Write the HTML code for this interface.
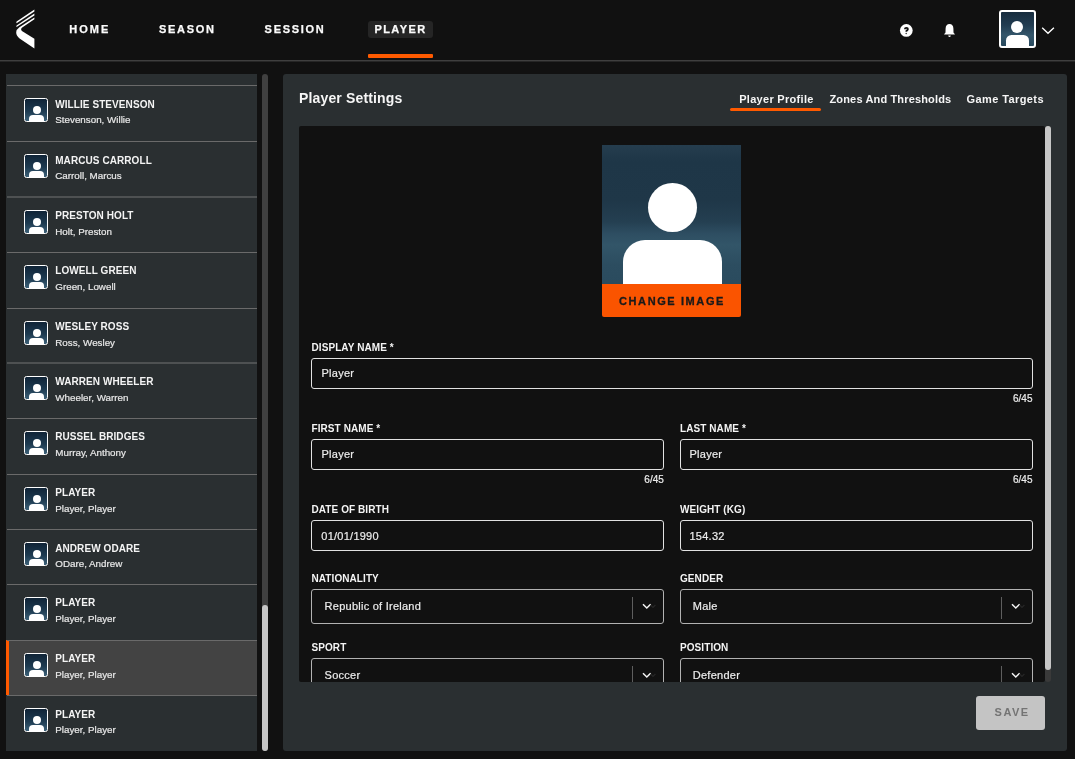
<!DOCTYPE html>
<html><head><meta charset="utf-8"><title>Player Settings</title>
<style>
html,body{margin:0;padding:0;}
body{width:1075px;height:759px;overflow:hidden;background:#111111;position:relative;font-family:"Liberation Sans", sans-serif;}
.b{position:absolute;}
.t{position:absolute;white-space:nowrap;}
.r{-webkit-text-stroke:0.2px currentColor;}
.av{box-sizing:content-box;background:linear-gradient(180deg,#102437 0%,#1d3a50 55%,#3d6178 100%);overflow:hidden;}
</style></head><body>
<div id="root" style="position:absolute;left:0;top:0;width:1075px;height:759px;overflow:hidden;will-change:transform;">
<svg class="b" style="left:0;top:0" width="60" height="60" viewBox="0 0 60 60">
<path fill="#fff" d="M34.4 9.6 L34.4 11.5 L16.6 23.2 L16.3 22.6 L16.6 21.5 Z"/>
<path fill="#fff" d="M34.4 13.5 L34.4 15.4 L16.6 27.1 L16.3 26.5 L16.6 25.4 Z"/>
<path fill="#fff" d="M34.4 17.5 L34.4 19.3 L22.2 27.6 Q20.2 29.2 21.9 31.1 L34.4 38.8 L34.4 48.4 L19.6 38.4 Q16.1 35.9 16.2 32.3 Q16.4 29.4 19.4 27.3 Z"/>
</svg>
<div class="b" style="left:368px;top:20.6px;width:65px;height:17px;background:#252525;border-radius:3px;"></div>
<div class="t" style="left:69.30px;top:24.00px;font-size:11px;line-height:11px;font-weight:bold;color:#fbfbfb;-webkit-text-stroke:0.25px #fbfbfb;letter-spacing:2.0px;">HOME</div>
<div class="t" style="left:159.00px;top:24.00px;font-size:11px;line-height:11px;font-weight:bold;color:#fbfbfb;-webkit-text-stroke:0.25px #fbfbfb;letter-spacing:1.7px;">SEASON</div>
<div class="t" style="left:264.60px;top:24.00px;font-size:11px;line-height:11px;font-weight:bold;color:#fbfbfb;-webkit-text-stroke:0.25px #fbfbfb;letter-spacing:1.7px;">SESSION</div>
<div class="t" style="left:374.40px;top:24.00px;font-size:11px;line-height:11px;font-weight:bold;color:#fbfbfb;-webkit-text-stroke:0.25px #fbfbfb;letter-spacing:1.45px;">PLAYER</div>
<div class="b" style="left:368px;top:54px;width:65px;height:4px;background:#ff5a00;border-radius:1px;"></div>
<div class="b" style="left:0px;top:60px;width:1075px;height:1px;background:#3f3f3f;"></div>
<div class="b" style="left:0px;top:61px;width:1075px;height:1px;background:#262626;"></div>
<svg class="b" style="left:898px;top:22px" width="18" height="18" viewBox="0 0 18 18">
<circle cx="8.3" cy="8.45" r="6.35" fill="#fff"/>
<path d="M7.0 7.3 Q6.9 5.9 8.4 5.9 Q9.9 5.9 9.9 7.1 Q9.9 7.9 9.0 8.4 Q8.3 8.8 8.3 9.7" stroke="#111" stroke-width="1.8" fill="none"/>
<circle cx="8.2" cy="11.6" r="0.75" fill="#333"/>
</svg>
<svg class="b" style="left:940px;top:20px" width="20" height="20" viewBox="0 0 20 20">
<path fill="#fff" d="M9.5 4 Q13.2 4 13.4 8.5 L13.5 12.6 Q13.8 13.4 14.8 13.9 L14.8 14.6 L4.2 14.6 L4.2 13.9 Q5.2 13.4 5.5 12.6 L5.6 8.5 Q5.8 4 9.5 4 Z"/>
<path fill="#fff" d="M8.2 15.4 L10.8 15.4 Q10.6 16.9 9.5 16.9 Q8.4 16.9 8.2 15.4 Z"/>
</svg>
<div class="b av" style="background:linear-gradient(180deg,#172c3e 0%,#223d52 40%,#34566b 68%,#284a5e 100%);left:999px;top:10px;width:33px;height:34px;border:2px solid #fff;border-radius:3px;"><div class="b" style="left:10.4px;top:9.4px;width:11.8px;height:11.8px;border-radius:50%;background:#fff"></div><div class="b" style="left:4.8px;top:22.8px;width:23.2px;height:12px;border-radius:5.5px 5.5px 0 0;background:#fff"></div></div>
<svg class="b" style="left:1038px;top:22px" width="20" height="16" viewBox="0 0 20 16">
<path d="M4.2 5.8 L10 11.3 L15.9 5.8" stroke="#fff" stroke-width="1.35" fill="none"/>
</svg>
<div class="b" style="left:6px;top:74px;width:251px;height:677px;background:#2a2f31;"></div>
<div class="b" style="left:7px;top:85px;width:250px;height:1px;background:#6a6a6a;"></div>
<div class="b av" style="left:24px;top:98px;width:22.3px;height:22.3px;border:1.5px solid #fff;border-radius:2.5px;"><div class="b" style="left:7.6px;top:6.6px;width:8.0px;height:8.0px;border-radius:50%;background:#fff"></div><div class="b" style="left:3.8px;top:15.6px;width:15.5px;height:8px;border-radius:4px 4px 0 0;background:#fff"></div></div>
<div class="t" style="left:55.20px;top:100.00px;font-size:10px;line-height:10px;font-weight:bold;color:#f4f4f4;letter-spacing:0.08px;">WILLIE STEVENSON</div>
<div class="t r" style="left:55.30px;top:115.00px;font-size:9.8px;line-height:9.8px;font-weight:normal;color:#e8e8e8;letter-spacing:0px;">Stevenson, Willie</div>
<div class="b" style="left:7px;top:141px;width:250px;height:1px;background:#6a6a6a;"></div>
<div class="b av" style="left:24px;top:154px;width:22.3px;height:22.3px;border:1.5px solid #fff;border-radius:2.5px;"><div class="b" style="left:7.6px;top:6.6px;width:8.0px;height:8.0px;border-radius:50%;background:#fff"></div><div class="b" style="left:3.8px;top:15.6px;width:15.5px;height:8px;border-radius:4px 4px 0 0;background:#fff"></div></div>
<div class="t" style="left:55.20px;top:156.00px;font-size:10px;line-height:10px;font-weight:bold;color:#f4f4f4;letter-spacing:0.08px;">MARCUS CARROLL</div>
<div class="t r" style="left:55.30px;top:171.00px;font-size:9.8px;line-height:9.8px;font-weight:normal;color:#e8e8e8;letter-spacing:0px;">Carroll, Marcus</div>
<div class="b" style="left:7px;top:196px;width:250px;height:2px;background:#4e5152;"></div>
<div class="b av" style="left:24px;top:210px;width:22.3px;height:22.3px;border:1.5px solid #fff;border-radius:2.5px;"><div class="b" style="left:7.6px;top:6.6px;width:8.0px;height:8.0px;border-radius:50%;background:#fff"></div><div class="b" style="left:3.8px;top:15.6px;width:15.5px;height:8px;border-radius:4px 4px 0 0;background:#fff"></div></div>
<div class="t" style="left:55.20px;top:211.00px;font-size:10px;line-height:10px;font-weight:bold;color:#f4f4f4;letter-spacing:0.08px;">PRESTON HOLT</div>
<div class="t r" style="left:55.30px;top:227.00px;font-size:9.8px;line-height:9.8px;font-weight:normal;color:#e8e8e8;letter-spacing:0px;">Holt, Preston</div>
<div class="b" style="left:7px;top:252px;width:250px;height:1px;background:#6a6a6a;"></div>
<div class="b av" style="left:24px;top:265px;width:22.3px;height:22.3px;border:1.5px solid #fff;border-radius:2.5px;"><div class="b" style="left:7.6px;top:6.6px;width:8.0px;height:8.0px;border-radius:50%;background:#fff"></div><div class="b" style="left:3.8px;top:15.6px;width:15.5px;height:8px;border-radius:4px 4px 0 0;background:#fff"></div></div>
<div class="t" style="left:55.20px;top:266.00px;font-size:10px;line-height:10px;font-weight:bold;color:#f4f4f4;letter-spacing:0.08px;">LOWELL GREEN</div>
<div class="t r" style="left:55.30px;top:282.00px;font-size:9.8px;line-height:9.8px;font-weight:normal;color:#e8e8e8;letter-spacing:0px;">Green, Lowell</div>
<div class="b" style="left:7px;top:308px;width:250px;height:1px;background:#6a6a6a;"></div>
<div class="b av" style="left:24px;top:321px;width:22.3px;height:22.3px;border:1.5px solid #fff;border-radius:2.5px;"><div class="b" style="left:7.6px;top:6.6px;width:8.0px;height:8.0px;border-radius:50%;background:#fff"></div><div class="b" style="left:3.8px;top:15.6px;width:15.5px;height:8px;border-radius:4px 4px 0 0;background:#fff"></div></div>
<div class="t" style="left:55.20px;top:322.00px;font-size:10px;line-height:10px;font-weight:bold;color:#f4f4f4;letter-spacing:0.08px;">WESLEY ROSS</div>
<div class="t r" style="left:55.30px;top:338.00px;font-size:9.8px;line-height:9.8px;font-weight:normal;color:#e8e8e8;letter-spacing:0px;">Ross, Wesley</div>
<div class="b" style="left:7px;top:362px;width:250px;height:2px;background:#4e5152;"></div>
<div class="b av" style="left:24px;top:376px;width:22.3px;height:22.3px;border:1.5px solid #fff;border-radius:2.5px;"><div class="b" style="left:7.6px;top:6.6px;width:8.0px;height:8.0px;border-radius:50%;background:#fff"></div><div class="b" style="left:3.8px;top:15.6px;width:15.5px;height:8px;border-radius:4px 4px 0 0;background:#fff"></div></div>
<div class="t" style="left:55.20px;top:377.00px;font-size:10px;line-height:10px;font-weight:bold;color:#f4f4f4;letter-spacing:0.08px;">WARREN WHEELER</div>
<div class="t r" style="left:55.30px;top:393.00px;font-size:9.8px;line-height:9.8px;font-weight:normal;color:#e8e8e8;letter-spacing:0px;">Wheeler, Warren</div>
<div class="b" style="left:7px;top:418px;width:250px;height:1px;background:#6a6a6a;"></div>
<div class="b av" style="left:24px;top:431px;width:22.3px;height:22.3px;border:1.5px solid #fff;border-radius:2.5px;"><div class="b" style="left:7.6px;top:6.6px;width:8.0px;height:8.0px;border-radius:50%;background:#fff"></div><div class="b" style="left:3.8px;top:15.6px;width:15.5px;height:8px;border-radius:4px 4px 0 0;background:#fff"></div></div>
<div class="t" style="left:55.20px;top:432.00px;font-size:10px;line-height:10px;font-weight:bold;color:#f4f4f4;letter-spacing:0.08px;">RUSSEL BRIDGES</div>
<div class="t r" style="left:55.30px;top:448.00px;font-size:9.8px;line-height:9.8px;font-weight:normal;color:#e8e8e8;letter-spacing:0px;">Murray, Anthony</div>
<div class="b" style="left:7px;top:474px;width:250px;height:1px;background:#6a6a6a;"></div>
<div class="b av" style="left:24px;top:487px;width:22.3px;height:22.3px;border:1.5px solid #fff;border-radius:2.5px;"><div class="b" style="left:7.6px;top:6.6px;width:8.0px;height:8.0px;border-radius:50%;background:#fff"></div><div class="b" style="left:3.8px;top:15.6px;width:15.5px;height:8px;border-radius:4px 4px 0 0;background:#fff"></div></div>
<div class="t" style="left:55.20px;top:488.00px;font-size:10px;line-height:10px;font-weight:bold;color:#f4f4f4;letter-spacing:0.08px;">PLAYER</div>
<div class="t r" style="left:55.30px;top:504.00px;font-size:9.8px;line-height:9.8px;font-weight:normal;color:#e8e8e8;letter-spacing:0px;">Player, Player</div>
<div class="b" style="left:7px;top:529px;width:250px;height:1px;background:#6a6a6a;"></div>
<div class="b av" style="left:24px;top:542px;width:22.3px;height:22.3px;border:1.5px solid #fff;border-radius:2.5px;"><div class="b" style="left:7.6px;top:6.6px;width:8.0px;height:8.0px;border-radius:50%;background:#fff"></div><div class="b" style="left:3.8px;top:15.6px;width:15.5px;height:8px;border-radius:4px 4px 0 0;background:#fff"></div></div>
<div class="t" style="left:55.20px;top:544.00px;font-size:10px;line-height:10px;font-weight:bold;color:#f4f4f4;letter-spacing:0.08px;">ANDREW ODARE</div>
<div class="t r" style="left:55.30px;top:559.00px;font-size:9.8px;line-height:9.8px;font-weight:normal;color:#e8e8e8;letter-spacing:0px;">ODare, Andrew</div>
<div class="b" style="left:7px;top:584px;width:250px;height:1px;background:#6a6a6a;"></div>
<div class="b av" style="left:24px;top:597px;width:22.3px;height:22.3px;border:1.5px solid #fff;border-radius:2.5px;"><div class="b" style="left:7.6px;top:6.6px;width:8.0px;height:8.0px;border-radius:50%;background:#fff"></div><div class="b" style="left:3.8px;top:15.6px;width:15.5px;height:8px;border-radius:4px 4px 0 0;background:#fff"></div></div>
<div class="t" style="left:55.20px;top:598.00px;font-size:10px;line-height:10px;font-weight:bold;color:#f4f4f4;letter-spacing:0.08px;">PLAYER</div>
<div class="t r" style="left:55.30px;top:614.00px;font-size:9.8px;line-height:9.8px;font-weight:normal;color:#e8e8e8;letter-spacing:0px;">Player, Player</div>
<div class="b" style="left:6px;top:640px;width:251px;height:55px;background:#434343;"></div>
<div class="b" style="left:6px;top:640px;width:3px;height:55px;background:#ff5a00;"></div>
<div class="b" style="left:7px;top:640px;width:250px;height:1px;background:#6a6a6a;"></div>
<div class="b av" style="left:24px;top:653px;width:22.3px;height:22.3px;border:1.5px solid #fff;border-radius:2.5px;"><div class="b" style="left:7.6px;top:6.6px;width:8.0px;height:8.0px;border-radius:50%;background:#fff"></div><div class="b" style="left:3.8px;top:15.6px;width:15.5px;height:8px;border-radius:4px 4px 0 0;background:#fff"></div></div>
<div class="t" style="left:55.20px;top:654.00px;font-size:10px;line-height:10px;font-weight:bold;color:#f4f4f4;letter-spacing:0.08px;">PLAYER</div>
<div class="t r" style="left:55.30px;top:670.00px;font-size:9.8px;line-height:9.8px;font-weight:normal;color:#e8e8e8;letter-spacing:0px;">Player, Player</div>
<div class="b" style="left:7px;top:695px;width:250px;height:1px;background:#6a6a6a;"></div>
<div class="b av" style="left:24px;top:708px;width:22.3px;height:22.3px;border:1.5px solid #fff;border-radius:2.5px;"><div class="b" style="left:7.6px;top:6.6px;width:8.0px;height:8.0px;border-radius:50%;background:#fff"></div><div class="b" style="left:3.8px;top:15.6px;width:15.5px;height:8px;border-radius:4px 4px 0 0;background:#fff"></div></div>
<div class="t" style="left:55.20px;top:710.00px;font-size:10px;line-height:10px;font-weight:bold;color:#f4f4f4;letter-spacing:0.08px;">PLAYER</div>
<div class="t r" style="left:55.30px;top:725.00px;font-size:9.8px;line-height:9.8px;font-weight:normal;color:#e8e8e8;letter-spacing:0px;">Player, Player</div>
<div class="b" style="left:262px;top:74px;width:6px;height:677px;background:#404040;border-radius:3px;"></div>
<div class="b" style="left:262px;top:605px;width:6px;height:146px;background:#c6c6c6;border-radius:3px;"></div>
<div class="b" style="left:283px;top:74px;width:783.5px;height:677px;background:#2a2f31;border-radius:3px;"></div>
<div class="t" style="left:299.00px;top:91.00px;font-size:14px;line-height:14px;font-weight:bold;color:#f6f6f6;letter-spacing:0.15px;">Player Settings</div>
<div class="t" style="left:739.20px;top:94.00px;font-size:11px;line-height:11px;font-weight:bold;color:#f6f6f6;letter-spacing:0.3px;">Player Profile</div>
<div class="t" style="left:829.50px;top:94.00px;font-size:11px;line-height:11px;font-weight:bold;color:#f6f6f6;letter-spacing:0.15px;">Zones And Thresholds</div>
<div class="t" style="left:966.60px;top:94.00px;font-size:11px;line-height:11px;font-weight:bold;color:#f6f6f6;letter-spacing:0.4px;">Game Targets</div>
<div class="b" style="left:730px;top:108px;width:91px;height:3px;background:#ff5a00;border-radius:1.5px;"></div>
<div class="b" style="left:299px;top:126px;width:752px;height:556px;overflow:hidden;"><div class="b" style="left:0;top:0;width:746px;height:556px;background:#111111;border-radius:2px;"></div><div class="b" style="left:303px;top:19px;width:139px;height:139px;background:linear-gradient(180deg,#253d4e 0%,#1e3647 12%,#1f3748 40%,#243f51 55%,#2e4e62 64%,#325568 72%,#2c4d60 86%,#2a4b5e 100%);"></div>
<div class="b" style="left:349px;top:57px;width:49px;height:49px;background:#fff;border-radius:50%;"></div>
<div class="b" style="left:323.5px;top:114px;width:99.5px;height:44px;background:#fff;border-radius:22px 22px 0 0;"></div>
<div class="b" style="left:303px;top:158px;width:139px;height:33px;background:#fa5400;border-radius:0 0 2px 2px;"></div>
<div class="t" style="left:320.00px;top:170.00px;font-size:11px;line-height:11px;font-weight:bold;color:#1a1a1a;-webkit-text-stroke:0.3px #1a1a1a;letter-spacing:1.6px;">CHANGE IMAGE</div>
<div class="t" style="left:12.50px;top:217.00px;font-size:10px;line-height:10px;font-weight:bold;color:#f4f4f4;letter-spacing:0.08px;">DISPLAY NAME *</div>
<div class="b" style="left:12px;top:232px;width:722px;height:31px;box-sizing:border-box;border:1.2px solid #e2e2e2;border-radius:3px;"></div>
<div class="t r" style="left:22.50px;top:242.00px;font-size:11px;line-height:11px;font-weight:normal;color:#ececec;letter-spacing:0.25px;">Player</div>
<div class="t r" style="right:18.50px;top:268.00px;font-size:10px;line-height:10px;font-weight:normal;color:#ececec;letter-spacing:0px;">6/45</div>
<div class="t" style="left:12.50px;top:298.00px;font-size:10px;line-height:10px;font-weight:bold;color:#f4f4f4;letter-spacing:0.08px;">FIRST NAME *</div>
<div class="t" style="left:381.00px;top:298.00px;font-size:10px;line-height:10px;font-weight:bold;color:#f4f4f4;letter-spacing:0.08px;">LAST NAME *</div>
<div class="b" style="left:12px;top:313px;width:353px;height:31px;box-sizing:border-box;border:1.2px solid #e2e2e2;border-radius:3px;"></div>
<div class="t r" style="left:22.50px;top:323.00px;font-size:11px;line-height:11px;font-weight:normal;color:#ececec;letter-spacing:0.25px;">Player</div>
<div class="b" style="left:381px;top:313px;width:353px;height:31px;box-sizing:border-box;border:1.2px solid #e2e2e2;border-radius:3px;"></div>
<div class="t r" style="left:390.50px;top:323.00px;font-size:11px;line-height:11px;font-weight:normal;color:#ececec;letter-spacing:0.25px;">Player</div>
<div class="t r" style="right:387.20px;top:349.00px;font-size:10px;line-height:10px;font-weight:normal;color:#ececec;letter-spacing:0px;">6/45</div>
<div class="t r" style="right:18.50px;top:349.00px;font-size:10px;line-height:10px;font-weight:normal;color:#ececec;letter-spacing:0px;">6/45</div>
<div class="t" style="left:12.50px;top:379.00px;font-size:10px;line-height:10px;font-weight:bold;color:#f4f4f4;letter-spacing:0.08px;">DATE OF BIRTH</div>
<div class="t" style="left:381.00px;top:379.00px;font-size:10px;line-height:10px;font-weight:bold;color:#f4f4f4;letter-spacing:0.08px;">WEIGHT (KG)</div>
<div class="b" style="left:12px;top:394px;width:353px;height:31px;box-sizing:border-box;border:1.2px solid #e2e2e2;border-radius:3px;"></div>
<div class="t r" style="left:22.30px;top:405.00px;font-size:11px;line-height:11px;font-weight:normal;color:#ececec;letter-spacing:0.25px;">01/01/1990</div>
<div class="b" style="left:381px;top:394px;width:353px;height:31px;box-sizing:border-box;border:1.2px solid #e2e2e2;border-radius:3px;"></div>
<div class="t r" style="left:390.50px;top:405.00px;font-size:11px;line-height:11px;font-weight:normal;color:#ececec;letter-spacing:0.25px;">154.32</div>
<div class="t" style="left:12.50px;top:448.00px;font-size:10px;line-height:10px;font-weight:bold;color:#f4f4f4;letter-spacing:0.08px;">NATIONALITY</div>
<div class="t" style="left:381.00px;top:448.00px;font-size:10px;line-height:10px;font-weight:bold;color:#f4f4f4;letter-spacing:0.08px;">GENDER</div>
<div class="b" style="left:12px;top:463px;width:353px;height:34.5px;box-sizing:border-box;border:1.2px solid #b2b2b2;border-radius:3px;"></div>
<div class="t r" style="left:25.60px;top:475.00px;font-size:11px;line-height:11px;font-weight:normal;color:#ececec;letter-spacing:0.25px;">Republic of Ireland</div>
<div class="b" style="left:333px;top:471px;width:1.3px;height:21.5px;background:#5e5e5e;"></div>
<svg class="b" style="left:342px;top:476px" width="20" height="10" viewBox="0 0 20 10"><path d="M2 2.2 L5.8 6 L9.6 2.2" stroke="#f4f4f4" stroke-width="1.5" fill="none"/><path d="M9.6 3 L12 5.5 L14.4 3" stroke="#262626" stroke-width="1.2" fill="none"/></svg>
<div class="b" style="left:381px;top:463px;width:353px;height:34.5px;box-sizing:border-box;border:1.2px solid #b2b2b2;border-radius:3px;"></div>
<div class="t r" style="left:393.80px;top:475.00px;font-size:11px;line-height:11px;font-weight:normal;color:#ececec;letter-spacing:0.25px;">Male</div>
<div class="b" style="left:702px;top:471px;width:1.3px;height:21.5px;background:#5e5e5e;"></div>
<svg class="b" style="left:711px;top:476px" width="20" height="10" viewBox="0 0 20 10"><path d="M2 2.2 L5.8 6 L9.6 2.2" stroke="#f4f4f4" stroke-width="1.5" fill="none"/><path d="M9.6 3 L12 5.5 L14.4 3" stroke="#262626" stroke-width="1.2" fill="none"/></svg>
<div class="t" style="left:12.50px;top:517.00px;font-size:10px;line-height:10px;font-weight:bold;color:#f4f4f4;letter-spacing:0.08px;">SPORT</div>
<div class="t" style="left:381.00px;top:517.00px;font-size:10px;line-height:10px;font-weight:bold;color:#f4f4f4;letter-spacing:0.08px;">POSITION</div>
<div class="b" style="left:12px;top:532px;width:353px;height:34.5px;box-sizing:border-box;border:1.2px solid #b2b2b2;border-radius:3px;"></div>
<div class="t r" style="left:25.60px;top:544.00px;font-size:11px;line-height:11px;font-weight:normal;color:#ececec;letter-spacing:0.25px;">Soccer</div>
<div class="b" style="left:333px;top:540px;width:1.3px;height:21.5px;background:#5e5e5e;"></div>
<svg class="b" style="left:342px;top:545px" width="20" height="10" viewBox="0 0 20 10"><path d="M2 2.2 L5.8 6 L9.6 2.2" stroke="#f4f4f4" stroke-width="1.5" fill="none"/><path d="M9.6 3 L12 5.5 L14.4 3" stroke="#262626" stroke-width="1.2" fill="none"/></svg>
<div class="b" style="left:381px;top:532px;width:353px;height:34.5px;box-sizing:border-box;border:1.2px solid #b2b2b2;border-radius:3px;"></div>
<div class="t r" style="left:393.80px;top:544.00px;font-size:11px;line-height:11px;font-weight:normal;color:#ececec;letter-spacing:0.25px;">Defender</div>
<div class="b" style="left:702px;top:540px;width:1.3px;height:21.5px;background:#5e5e5e;"></div>
<svg class="b" style="left:711px;top:545px" width="20" height="10" viewBox="0 0 20 10"><path d="M2 2.2 L5.8 6 L9.6 2.2" stroke="#f4f4f4" stroke-width="1.5" fill="none"/><path d="M9.6 3 L12 5.5 L14.4 3" stroke="#262626" stroke-width="1.2" fill="none"/></svg>
<div class="b" style="left:746px;top:0px;width:6px;height:556px;background:#3a3a3a;border-radius:3px;"></div>
<div class="b" style="left:746px;top:0px;width:6px;height:544px;background:#c6c6c6;border-radius:3px;"></div>
</div>
<div class="b" style="left:976px;top:696px;width:69px;height:33.5px;background:#c4c4c4;border-radius:3px;"></div>
<div class="t" style="left:994.60px;top:707.00px;font-size:11px;line-height:11px;font-weight:bold;color:#747474;letter-spacing:1.45px;">SAVE</div>

</div>
</body></html>
